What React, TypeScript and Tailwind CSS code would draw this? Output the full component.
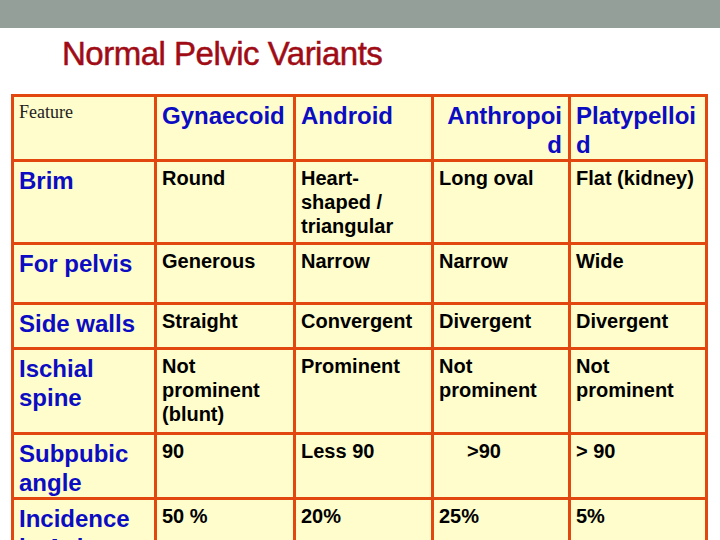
import React from "react";

const label = "text-[24px] leading-[29px] font-bold text-[#0c0cc2]";
const body = "text-[20px] leading-[24px] font-bold text-black";
const cell = "bg-[#fefdcb] pl-[5px] pr-[4px] pt-[4px] overflow-hidden";

export default function App() {
  const rows: { label: React.ReactNode; vals: React.ReactNode[] }[] = [
    {
      label: "Brim",
      vals: [
        "Round",
        <>
          Heart-
          <br />
          shaped /
          <br />
          triangular
        </>,
        "Long oval",
        "Flat (kidney)",
      ],
    },
    { label: "For pelvis", vals: ["Generous", "Narrow", "Narrow", "Wide"] },
    { label: "Side walls", vals: ["Straight", "Convergent", "Divergent", "Divergent"] },
    {
      label: (
        <>
          Ischial
          <br />
          spine
        </>
      ),
      vals: [
        <>
          Not
          <br />
          prominent
          <br />
          (blunt)
        </>,
        "Prominent",
        <>
          Not
          <br />
          prominent
        </>,
        <>
          Not
          <br />
          prominent
        </>,
      ],
    },
    {
      label: (
        <>
          Subpubic
          <br />
          angle
        </>
      ),
      vals: ["90", "Less 90", <span className="ml-[28px]">&gt;90</span>, "> 90"],
    },
    {
      label: (
        <>
          Incidence
          <br />
          in Asians
        </>
      ),
      vals: ["50 %", "20%", "25%", "5%"],
    },
  ];

  return (
    <div
      className="w-[720px] h-[540px] overflow-hidden bg-white"
      style={{ fontFamily: '"Liberation Sans", Arial, sans-serif' }}
    >
      <div className="h-[28px] bg-[#939f98]" />
      <div className="mt-[8px] pl-[62px] h-[36px] text-[33px] leading-[36px] tracking-[-0.5px] text-[#a00c16] [-webkit-text-stroke:0.5px_#a00c16]">
        Normal Pelvic Variants
      </div>
      <div className="mt-[22px] ml-[11px] inline-grid grid-cols-[140px_136px_135px_134px_134px] grid-rows-[62px_80px_57px_42px_82px_62px_62px] gap-[3px] p-[3px] bg-[#e2470f]">
        <div className={cell}>
          <div
            className="text-[18px] leading-[22px] text-[#222]"
            style={{ fontFamily: '"Liberation Serif", "Times New Roman", serif' }}
          >
            Feature
          </div>
        </div>
        <div className={cell}>
          <div className={label}>Gynaecoid</div>
        </div>
        <div className={cell}>
          <div className={label}>Android</div>
        </div>
        <div className={cell}>
          <div className={label + " text-right pr-[2px] leading-[28px]"}>
            Anthropoi
            <br />d
          </div>
        </div>
        <div className={cell}>
          <div className={label + " leading-[28px]"}>
            Platypelloi
            <br />d
          </div>
        </div>
        {rows.map((r, i) => (
          <React.Fragment key={i}>
            <div className={cell}>
              <div className={label}>{r.label}</div>
            </div>
            {r.vals.map((v, j) => (
              <div key={j} className={cell}>
                <div className={body}>{v}</div>
              </div>
            ))}
          </React.Fragment>
        ))}
      </div>
    </div>
  );
}
